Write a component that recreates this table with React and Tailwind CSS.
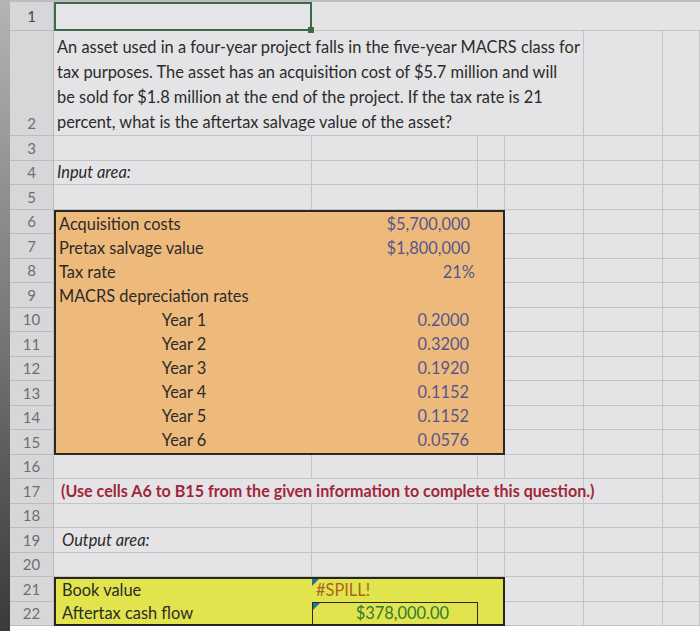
import React from "react";

const line = "border-[#c4c4c6]";

const Hdr = ({ n, className = "" }) => (
  <div
    className={`w-[44px] shrink-0 flex items-center justify-center border-b border-r border-[#bcbcbe] bg-[#d7d7d9] text-[15px] text-[#6e6e70] ${className}`}
  >
    {n}
  </div>
);

const Cell = ({ w, children, className = "" }) => (
  <div className={`${w} shrink-0 border-b border-r ${line} ${className}`}>{children}</div>
);

const Row = ({ n, children }) => (
  <div className="flex h-[24.5px] shrink-0">
    <Hdr n={n} />
    {children}
  </div>
);

const Plain = ({ n }) => (
  <Row n={n}>
    <Cell w="w-[258px]" />
    <Cell w="w-[166px]" />
    <Cell w="w-[27px]" />
    <Cell w="w-[79px]" />
    <Cell w="w-[79px]" />
    <Cell w="w-[37px]" />
  </Row>
);

const Flag = () => (
  <span className="absolute left-0 top-0 h-0 w-0 border-t-[7px] border-r-[7px] border-t-[#1f7795] border-r-transparent" />
);

const inputs = [
  { label: "Acquisition costs", value: "$5,700,000", pr: "pr-[8px]" },
  { label: "Pretax salvage value", value: "$1,800,000", pr: "pr-[8px]" },
  { label: "Tax rate", value: "21%", pr: "pr-[3px]" },
  { label: "MACRS depreciation rates", value: "" },
  { year: "Year 1", value: "0.2000" },
  { year: "Year 2", value: "0.3200" },
  { year: "Year 3", value: "0.1920" },
  { year: "Year 4", value: "0.1152" },
  { year: "Year 5", value: "0.1152" },
  { year: "Year 6", value: "0.0576" },
];

export default function App() {
  return (
    <div
      className="flex h-[631px] w-[700px] overflow-hidden bg-white text-[16.4px] leading-[20px] text-[#2b2b2b]"
      style={{ fontFamily: "Lato, 'Open Sans', sans-serif" }}
    >
      <div className="w-[10px] shrink-0 bg-gradient-to-b from-[#b4b4b6] via-[#7a7a7c] to-[#3a3a3c]" />
      <div className="flex w-[690px] flex-col bg-[#e4e4e6]">
        <div className="h-[2px] shrink-0 bg-[#bdbdbf]" />

        {/* row 1 */}
        <div className="flex h-[29px] shrink-0">
          <Hdr n="1" className="bg-[#c6c6c8] text-[#444446]" />
          <div className="relative w-[258px] shrink-0 border-2 border-[#3b6b47] bg-[#e6e6e8]">
            <span className="absolute -bottom-[4px] -right-[4px] h-[6px] w-[6px] bg-[#3b6b47]" />
          </div>
          <div className={`flex-1 border-b ${line}`} />
        </div>

        {/* row 2 */}
        <div className="flex h-[105px] shrink-0">
          <Hdr n="2" className="items-end pb-[2px]" />
          <Cell w="w-[530px]" className="flex items-end pb-[1px] pl-[3px]">
            <p className="whitespace-nowrap leading-[25px]">
              An asset used in a four-year project falls in the five-year MACRS class for
              <br />
              tax purposes. The asset has an acquisition cost of $5.7 million and will
              <br />
              be sold for $1.8 million at the end of the project. If the tax rate is 21
              <br />
              percent, what is the aftertax salvage value of the asset?
            </p>
          </Cell>
          <Cell w="w-[79px]" />
          <Cell w="w-[37px]" />
        </div>

        <Plain n="3" />
        <Row n="4">
          <Cell w="w-[258px]" className="flex items-center pl-[3px] italic">
            Input area:
          </Cell>
          <Cell w="w-[166px]" />
          <Cell w="w-[27px]" />
          <Cell w="w-[79px]" />
          <Cell w="w-[79px]" />
          <Cell w="w-[37px]" />
        </Row>
        <Plain n="5" />

        {/* rows 6-15 input box */}
        <div className="flex shrink-0">
          <div className="flex flex-col">
            {[6, 7, 8, 9, 10, 11, 12, 13, 14, 15].map((n) => (
              <Hdr key={n} n={n} className="h-[24.5px]" />
            ))}
          </div>
          <div className="flex h-[245px] w-[451px] shrink-0 flex-col border-2 border-[#2a2622] bg-[#eeba7c]">
            {inputs.map((r, i) => (
              <div key={i} className="flex min-h-0 flex-1 items-center">
                <div className={`w-[256px] shrink-0 ${r.year ? "text-center" : "pl-[3px]"}`}>
                  {r.year || r.label}
                </div>
                <div className={`w-[166px] text-right text-[#57568a] ${r.pr || "pr-[9px]"}`}>
                  {r.value}
                </div>
              </div>
            ))}
          </div>
          <div className="flex flex-col">
            {Array.from({ length: 10 }).map((_, i) => (
              <div key={i} className="flex h-[24.5px]">
                <Cell w="w-[79px]" />
                <Cell w="w-[79px]" />
                <Cell w="w-[37px]" />
              </div>
            ))}
          </div>
        </div>

        <Plain n="16" />
        <Row n="17">
          <Cell
            w="w-[530px]"
            className="flex items-center whitespace-nowrap pl-[7px] text-[16.1px] font-bold text-[#a2263a]"
          >
            (Use cells A6 to B15 from the given information to complete this question.)
          </Cell>
          <Cell w="w-[79px]" />
          <Cell w="w-[37px]" />
        </Row>
        <Plain n="18" />
        <Row n="19">
          <Cell w="w-[258px]" className="flex items-center pl-[8px] italic">
            Output area:
          </Cell>
          <Cell w="w-[166px]" />
          <Cell w="w-[27px]" />
          <Cell w="w-[79px]" />
          <Cell w="w-[79px]" />
          <Cell w="w-[37px]" />
        </Row>
        <Plain n="20" />

        {/* rows 21-22 output box */}
        <div className="flex shrink-0">
          <div className="flex flex-col">
            <Hdr n="21" className="h-[24.5px]" />
            <Hdr n="22" className="h-[24.5px]" />
          </div>
          <div className="flex h-[49px] w-[451px] shrink-0 flex-col border-2 border-[#26261e] bg-[#e1e44c]">
            <div className="flex min-h-0 flex-1 items-center">
              <div className="w-[256px] shrink-0 pl-[6px]">Book value</div>
              <div className="relative flex h-full w-[166px] items-center pl-[4px] text-[#a8651e]">
                <Flag />
                #SPILL!
              </div>
            </div>
            <div className="flex min-h-0 flex-1 items-stretch">
              <div className="flex w-[256px] shrink-0 items-center pl-[6px]">Aftertax cash flow</div>
              <div className="relative flex w-[166px] items-center justify-end border-l border-r border-t border-[#2a2a22] pr-[28px] text-[#2e7a36]">
                <Flag />
                $378,000.00
              </div>
            </div>
          </div>
          <div className="flex flex-col">
            {[0, 1].map((i) => (
              <div key={i} className="flex h-[24.5px]">
                <Cell w="w-[79px]" />
                <Cell w="w-[79px]" />
                <Cell w="w-[37px]" />
              </div>
            ))}
          </div>
        </div>

        <div className="h-[5px] shrink-0 bg-white" />
      </div>
    </div>
  );
}
